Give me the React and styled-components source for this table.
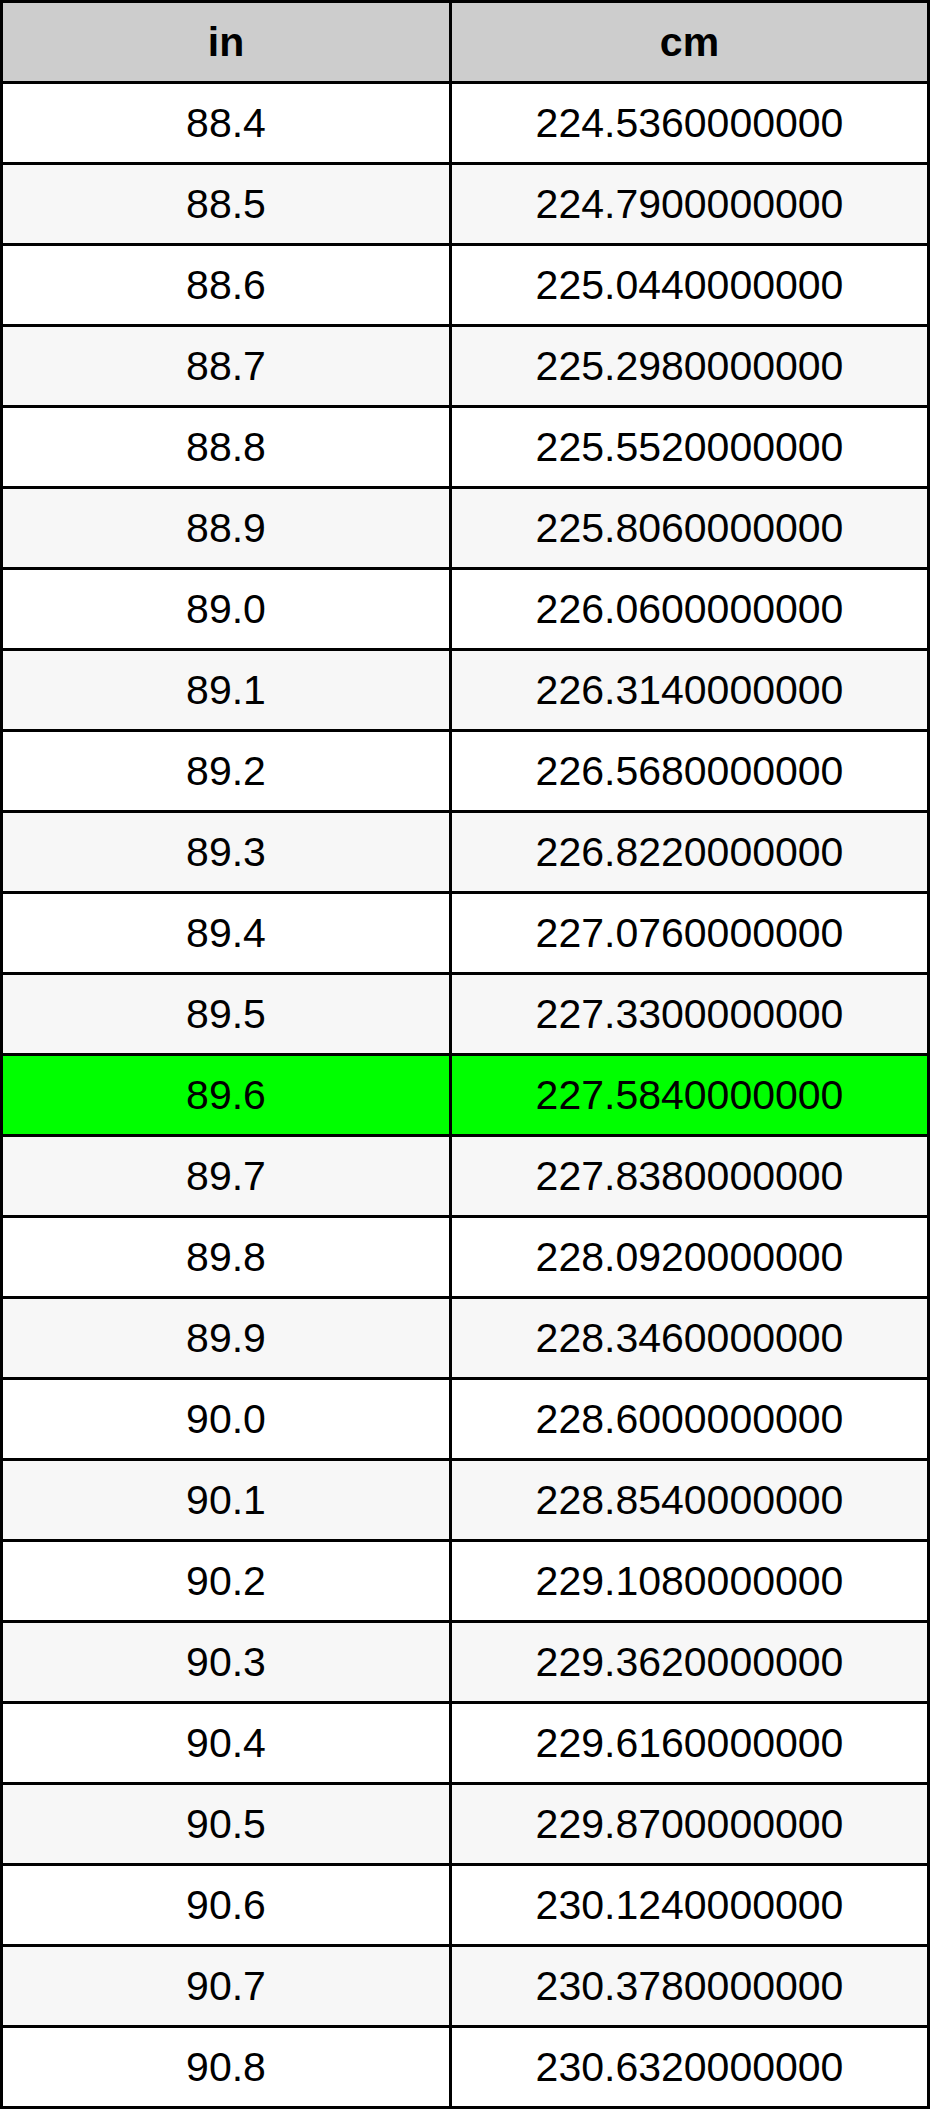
import React from "react";
import styled, { createGlobalStyle } from "styled-components";

const GlobalStyle = createGlobalStyle`
  body {
    margin: 0;
    background: #fff;
    font-family: "Liberation Sans", Arial, sans-serif;
  }
`;

const HIGHLIGHT = "89.6";

const rows = [];
for (let i = 884; i <= 908; i++) {
  const inches = i / 10;
  rows.push({
    inch: inches.toFixed(1),
    cm: (Math.round(i * 254) / 1000).toFixed(10),
  });
}

const App = () => {
  return (
    <>
      <GlobalStyle />
      <Table>
        <HeadCell>in</HeadCell>
        <HeadCell>cm</HeadCell>
        {rows.map((r, i) => {
          const tone = r.inch === HIGHLIGHT ? "hit" : i % 2 === 1 ? "alt" : "plain";
          return (
            <React.Fragment key={r.inch}>
              <Cell $tone={tone}>{r.inch}</Cell>
              <Cell $tone={tone}>{r.cm}</Cell>
            </React.Fragment>
          );
        })}
      </Table>
    </>
  );
};

export default App;

const Table = styled.div`
  display: grid;
  grid-template-columns: 446px 475px;
  grid-auto-rows: 78px;
  gap: 3px;
  padding: 3px;
  width: 930px;
  box-sizing: border-box;
  background: #000;
`;

const HeadCell = styled.div`
  display: flex;
  align-items: center;
  justify-content: center;
  background: #cdcdcd;
  color: #000;
  font-size: 41px;
  font-weight: 700;
`;

const toneColors = {
  plain: "#ffffff",
  alt: "#f7f7f7",
  hit: "#00ff00",
};

const Cell = styled.div`
  display: flex;
  align-items: center;
  justify-content: center;
  background: ${(p) => toneColors[p.$tone]};
  color: #000;
  font-size: 41px;
`;
